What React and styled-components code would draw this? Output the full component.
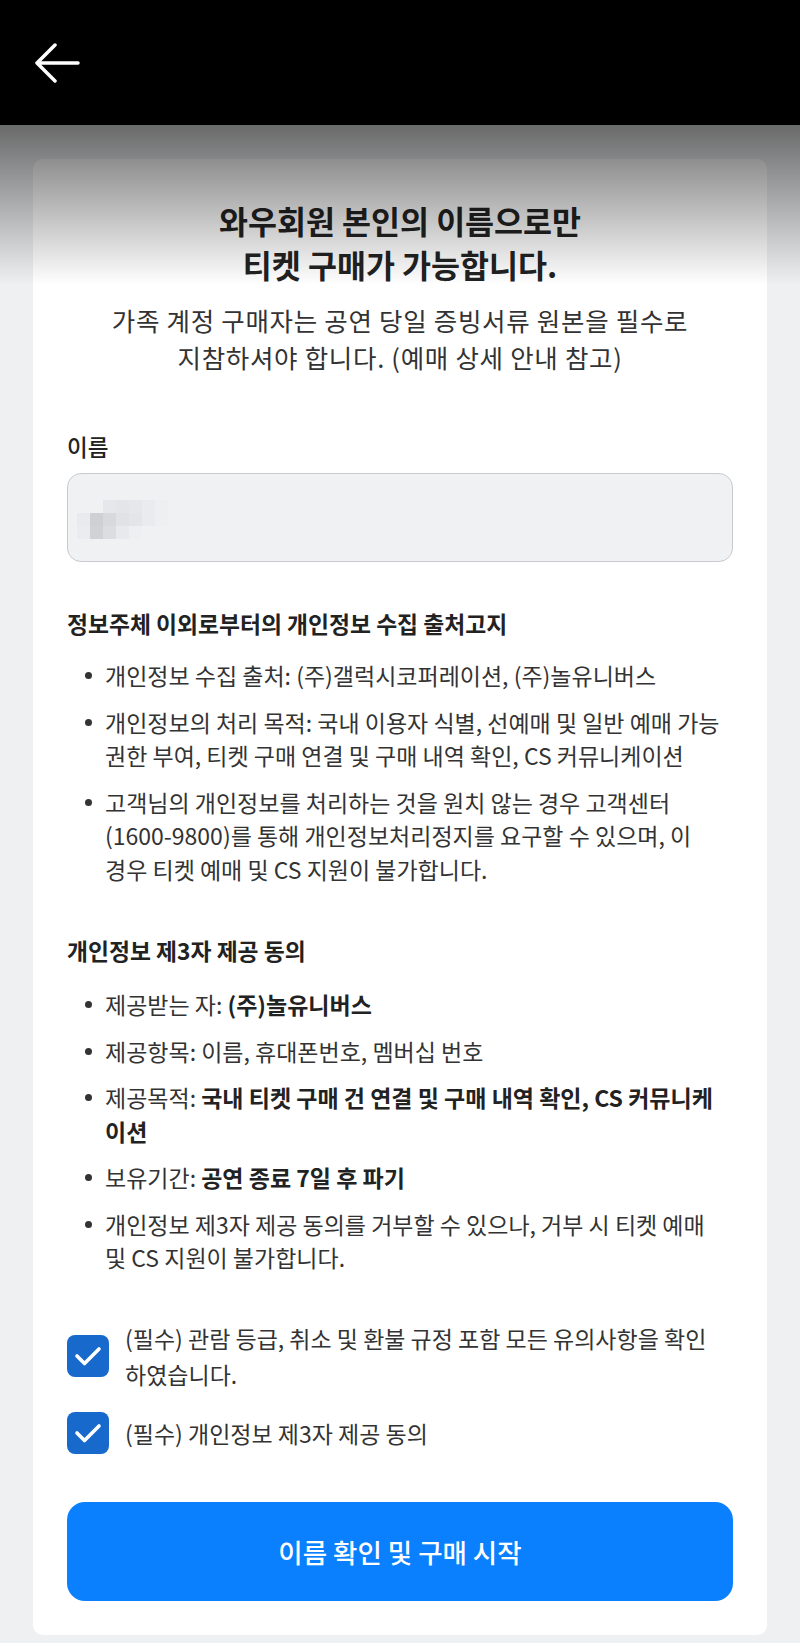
import React from "react";
import styled, { createGlobalStyle } from "styled-components";

const GlobalStyle = createGlobalStyle`
  body {
    margin: 0;
    background: #eff0f2;
    font-family: "Noto Sans CJK KR", "Noto Sans", sans-serif;
  }
`;

const Page = styled.div`
  position: relative;
  min-height: 1643px;
`;

const Header = styled.header`
  height: 125px;
  background: #000;
  display: flex;
  align-items: center;
  padding-left: 35px;
  box-sizing: border-box;
`;

/**
 * Dim shade that fades out under the header, over the card
 */
const TopShade = styled.div`
  position: absolute;
  top: 125px;
  left: 0;
  right: 0;
  height: 160px;
  background: linear-gradient(rgba(0, 0, 0, 0.56), rgba(0, 0, 0, 0));
  pointer-events: none;
`;

const Main = styled.main`
  padding: 34px 33px 8px;
`;

const Card = styled.section`
  background: #fff;
  border-radius: 10px;
  padding: 39px 34px 34px;
`;

const Title = styled.h1`
  margin: 0;
  text-align: center;
  font-size: 31.5px;
  font-weight: 700;
  line-height: 44px;
  color: #222;
`;

const Subtitle = styled.p`
  margin: 15px 0 0;
  text-align: center;
  font-size: 25.5px;
  letter-spacing: 0.7px;
  line-height: 37px;
  color: #333;
`;

const Label = styled.div`
  margin-top: 56px;
  font-size: 22.5px;
  font-weight: 500;
  line-height: 30px;
  color: #222;
`;

const NameField = styled.div`
  margin-top: 12px;
  height: 89px;
  box-sizing: border-box;
  background: #f0f1f3;
  border: 1px solid #c9cacd;
  border-radius: 14px;
  display: flex;
  align-items: center;
  padding: 4px 0 0 9px;
`;

/**
 * Pixelated blur over the member's name
 */
const Mosaic = styled.div`
  display: grid;
  grid-template-columns: repeat(7, 13px);
  grid-auto-rows: 13px;
`;

const Cell = styled.span`
  background: ${(props) => props.tone};
`;

const Section = styled.div`
  margin-top: ${(props) => props.gap}px;
`;

const SectionTitle = styled.h2`
  margin: 0;
  font-size: 22.8px;
  font-weight: 700;
  line-height: 30px;
  color: #222;
`;

const List = styled.ul`
  margin: ${(props) => props.offset}px 0 0;
  padding: 0;
  list-style: none;
  display: flex;
  flex-direction: column;
  gap: 13px;
`;

const Item = styled.li`
  position: relative;
  padding-left: 38px;
  font-size: 23px;
  line-height: 33.5px;
  color: #333;
  white-space: nowrap;

  &::before {
    content: "";
    position: absolute;
    left: 18px;
    top: 13px;
    width: 7px;
    height: 7px;
    border-radius: 50%;
    background: #333;
  }
`;

const Strong = styled.b`
  font-weight: 700;
  color: #222;
`;

const Checks = styled.div`
  margin-top: 45px;
  display: flex;
  flex-direction: column;
  gap: 20px;
`;

const CheckRow = styled.label`
  display: flex;
  align-items: center;
  gap: 16px;
`;

const Box = styled.span`
  flex: none;
  width: 42px;
  height: 42px;
  border-radius: 8px;
  background: #1769cc;
  display: flex;
  align-items: center;
  justify-content: center;
`;

const CheckText = styled.span`
  font-size: 23px;
  line-height: 36px;
  color: #333;
  white-space: nowrap;
`;

const Submit = styled.button`
  margin-top: 48px;
  width: 100%;
  height: 99px;
  border: none;
  border-radius: 18px;
  background: #0a80ff;
  color: #fff;
  font-family: inherit;
  font-size: 26.5px;
  font-weight: 500;
`;

const mosaicTones = [
  "#f0f1f3", "#f0f1f3", "#e6e7ea", "#e4e5e8", "#e6e7ea", "#eaebee", "#eeeff1",
  "#e9eaed", "#cfd0d4", "#d8d9dc", "#e1e2e5", "#e4e5e8", "#eaebee", "#eeeff1",
  "#ebecef", "#d1d2d6", "#dcdde0", "#e8e9ec", "#eeeff1", "#f0f1f3", "#f0f1f3",
];

function BackArrow() {
  return (
    <svg width="45" height="40" viewBox="0 0 45 40" fill="none" stroke="#fff" strokeWidth="3.5" strokeLinecap="round" strokeLinejoin="round">
      <path d="M43 20H3M20 2 2 20l18 18" />
    </svg>
  );
}

function CheckMark() {
  return (
    <svg width="42" height="42" viewBox="0 0 42 42" fill="none" stroke="#fff" strokeWidth="3.6" strokeLinecap="round" strokeLinejoin="round">
      <path d="M10 21l7.5 7.5L32 14" />
    </svg>
  );
}

export default function App() {
  return (
    <Page>
      <GlobalStyle />
      <Header>
        <BackArrow />
      </Header>
      <TopShade />
      <Main>
        <Card>
          <Title>
            와우회원 본인의 이름으로만
            <br />
            티켓 구매가 가능합니다.
          </Title>
          <Subtitle>
            가족 계정 구매자는 공연 당일 증빙서류 원본을 필수로
            <br />
            지참하셔야 합니다. (예매 상세 안내 참고)
          </Subtitle>

          <Label>이름</Label>
          <NameField>
            <Mosaic aria-hidden="true">
              {mosaicTones.map((tone, i) => (
                <Cell key={i} tone={tone} />
              ))}
            </Mosaic>
          </NameField>

          <Section gap={47}>
            <SectionTitle>정보주체 이외로부터의 개인정보 수집 출처고지</SectionTitle>
            <List offset={20}>
              <Item>개인정보 수집 출처: (주)갤럭시코퍼레이션, (주)놀유니버스</Item>
              <Item>
                개인정보의 처리 목적: 국내 이용자 식별, 선예매 및 일반 예매 가능
                <br />
                권한 부여, 티켓 구매 연결 및 구매 내역 확인, CS 커뮤니케이션
              </Item>
              <Item>
                고객님의 개인정보를 처리하는 것을 원치 않는 경우 고객센터
                <br />
                (1600-9800)를 통해 개인정보처리정지를 요구할 수 있으며, 이
                <br />
                경우 티켓 예매 및 CS 지원이 불가합니다.
              </Item>
            </List>
          </Section>

          <Section gap={50}>
            <SectionTitle>개인정보 제3자 제공 동의</SectionTitle>
            <List offset={22}>
              <Item>
                제공받는 자: <Strong>(주)놀유니버스</Strong>
              </Item>
              <Item>제공항목: 이름, 휴대폰번호, 멤버십 번호</Item>
              <Item>
                제공목적: <Strong>국내 티켓 구매 건 연결 및 구매 내역 확인, CS 커뮤니케</Strong>
                <br />
                <Strong>이션</Strong>
              </Item>
              <Item>
                보유기간: <Strong>공연 종료 7일 후 파기</Strong>
              </Item>
              <Item>
                개인정보 제3자 제공 동의를 거부할 수 있으나, 거부 시 티켓 예매
                <br />
                및 CS 지원이 불가합니다.
              </Item>
            </List>
          </Section>

          <Checks>
            <CheckRow>
              <Box>
                <CheckMark />
              </Box>
              <CheckText>
                (필수) 관람 등급, 취소 및 환불 규정 포함 모든 유의사항을 확인
                <br />
                하였습니다.
              </CheckText>
            </CheckRow>
            <CheckRow>
              <Box>
                <CheckMark />
              </Box>
              <CheckText>(필수) 개인정보 제3자 제공 동의</CheckText>
            </CheckRow>
          </Checks>

          <Submit type="button">이름 확인 및 구매 시작</Submit>
        </Card>
      </Main>
    </Page>
  );
}
